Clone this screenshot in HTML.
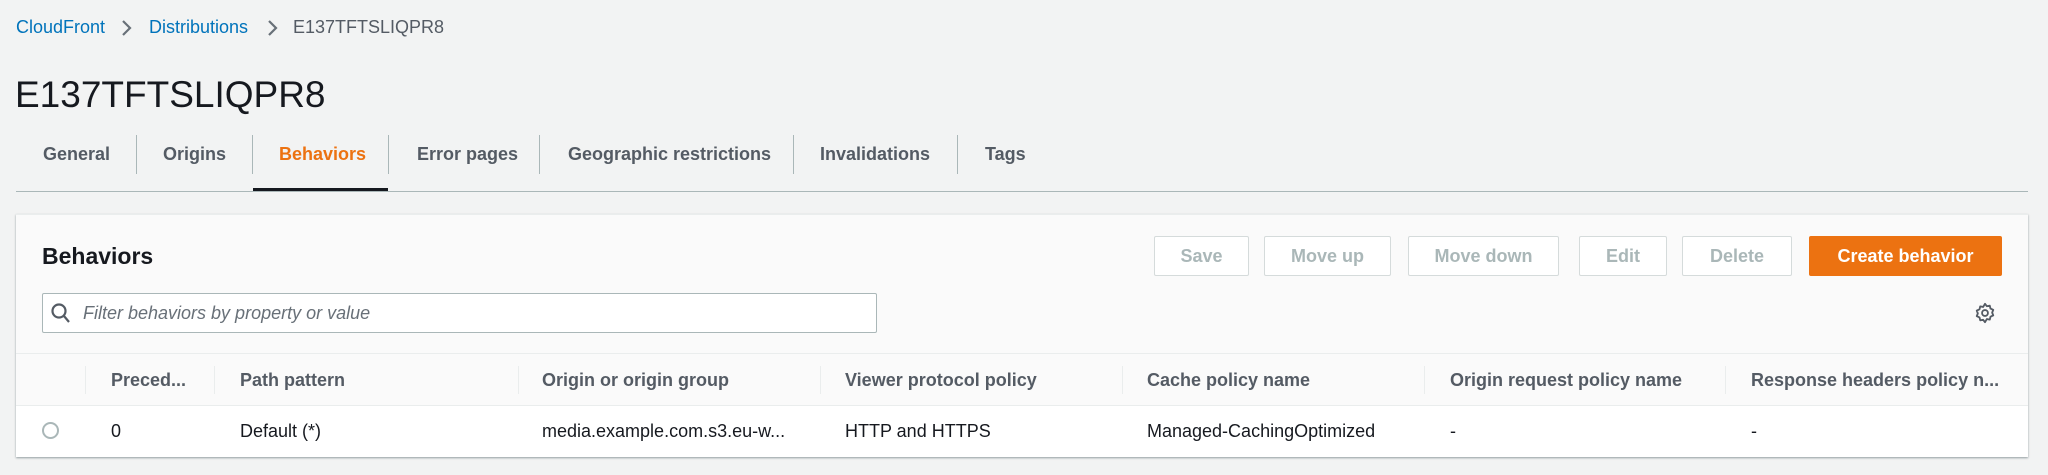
<!DOCTYPE html>
<html><head><meta charset="utf-8"><style>
*{box-sizing:border-box;margin:0;padding:0}
body{width:2048px;height:475px;background:#f2f3f3;font-family:"Liberation Sans",sans-serif;color:#16191f;position:relative;overflow:hidden;font-size:18px}
.a{position:absolute;white-space:nowrap}
.link{color:#0073bb}
.tab{position:absolute;top:144px;font-weight:bold;color:#545b64;font-size:18px}
.sep{position:absolute;top:135px;width:1px;height:39px;background:#aab7b8}
.btn{position:absolute;top:236px;height:40px;border:1px solid #d5dbdb;background:#fff;color:#aab7b8;font-weight:bold;font-size:18px;display:flex;align-items:center;justify-content:center;border-radius:2px}
.th{position:absolute;top:370px;font-weight:bold;color:#545b64;font-size:18px}
.cs{position:absolute;top:366px;width:1px;height:28px;background:#eaeded}
.td{position:absolute;top:421px;font-size:18px;color:#16191f}
</style></head><body>
<div class="a link" style="left:16px;top:17px;font-size:18px">CloudFront</div>
<svg class="a" style="left:120px;top:18px" width="14" height="20"><path d="M3 3l7 7-7 7" stroke="#687078" stroke-width="2.2" fill="none"/></svg>
<div class="a link" style="left:149px;top:17px;font-size:18px">Distributions</div>
<svg class="a" style="left:266px;top:18px" width="14" height="20"><path d="M3 3l7 7-7 7" stroke="#687078" stroke-width="2.2" fill="none"/></svg>
<div class="a" style="left:293px;top:17px;font-size:18px;color:#545b64">E137TFTSLIQPR8</div>
<div class="a" style="left:15px;top:74px;font-size:37px">E137TFTSLIQPR8</div>

<div class="tab" style="left:43px">General</div>
<div class="sep" style="left:136px"></div>
<div class="tab" style="left:163px">Origins</div>
<div class="sep" style="left:252px"></div>
<div class="tab" style="left:279px;color:#ec7211">Behaviors</div>
<div class="sep" style="left:388px"></div>
<div class="tab" style="left:417px">Error pages</div>
<div class="sep" style="left:539px"></div>
<div class="tab" style="left:568px">Geographic restrictions</div>
<div class="sep" style="left:793px"></div>
<div class="tab" style="left:820px">Invalidations</div>
<div class="sep" style="left:957px"></div>
<div class="tab" style="left:985px">Tags</div>
<div class="a" style="left:16px;top:191px;width:2012px;height:1px;background:#aab7b8"></div>
<div class="a" style="left:253px;top:188px;width:135px;height:3px;background:#16191f"></div>

<div class="a" style="left:16px;top:214px;width:2012px;height:243px;background:#fafafa;box-shadow:0 1px 2px rgba(0,28,36,.4);border-top:1px solid #eaeded"></div>
<div class="a" style="left:42px;top:243px;font-size:23px;font-weight:bold">Behaviors</div>
<div class="btn" style="left:1154px;width:95px">Save</div>
<div class="btn" style="left:1264px;width:127px">Move up</div>
<div class="btn" style="left:1408px;width:151px">Move down</div>
<div class="btn" style="left:1579px;width:88px">Edit</div>
<div class="btn" style="left:1682px;width:110px">Delete</div>
<div class="btn" style="left:1809px;width:193px;background:#ec7211;border-color:#ec7211;color:#fff">Create behavior</div>

<div class="a" style="left:42px;top:293px;width:835px;height:40px;background:#fff;border:1px solid #aab7b8;border-radius:2px"></div>
<svg class="a" style="left:51px;top:303px" width="20" height="22"><circle cx="8" cy="8" r="6.5" stroke="#545b64" stroke-width="2.2" fill="none"/><path d="M13 13l5 6" stroke="#545b64" stroke-width="2.2"/></svg>
<div class="a" style="left:83px;top:303px;font-style:italic;color:#687078;font-size:18px">Filter behaviors by property or value</div>
<svg class="a" style="left:1974px;top:302px" width="22" height="22" viewBox="0 0 24 24"><path d="M12 2l2 2.6 3.2-.6.8 3.2 3 1.4-1.2 3 1.2 3-3 1.4-.8 3.2-3.2-.6L12 22l-2-2.6-3.2.6-.8-3.2-3-1.4 1.2-3-1.2-3 3-1.4.8-3.2 3.2.6z" stroke="#545b64" stroke-width="2" fill="none" stroke-linejoin="round"/><circle cx="12" cy="12" r="3.2" stroke="#545b64" stroke-width="2" fill="none"/></svg>

<div class="a" style="left:16px;top:353px;width:2012px;height:1px;background:#eaeded"></div>
<div class="a" style="left:16px;top:405px;width:2012px;height:52px;background:#fff;border-top:1px solid #eaeded"></div>
<div class="cs" style="left:85px"></div><div class="cs" style="left:214px"></div><div class="cs" style="left:518px"></div><div class="cs" style="left:820px"></div><div class="cs" style="left:1122px"></div><div class="cs" style="left:1424px"></div><div class="cs" style="left:1725px"></div>
<div class="th" style="left:111px">Preced...</div>
<div class="th" style="left:240px">Path pattern</div>
<div class="th" style="left:542px">Origin or origin group</div>
<div class="th" style="left:845px">Viewer protocol policy</div>
<div class="th" style="left:1147px">Cache policy name</div>
<div class="th" style="left:1450px">Origin request policy name</div>
<div class="th" style="left:1751px">Response headers policy n...</div>
<div class="a" style="left:42px;top:422px;width:17px;height:17px;border:2px solid #aab7b8;border-radius:50%;background:#fff"></div>
<div class="td" style="left:111px">0</div>
<div class="td" style="left:240px">Default (*)</div>
<div class="td" style="left:542px">media.example.com.s3.eu-w...</div>
<div class="td" style="left:845px">HTTP and HTTPS</div>
<div class="td" style="left:1147px">Managed-CachingOptimized</div>
<div class="td" style="left:1450px">-</div>
<div class="td" style="left:1751px">-</div>
</body></html>
